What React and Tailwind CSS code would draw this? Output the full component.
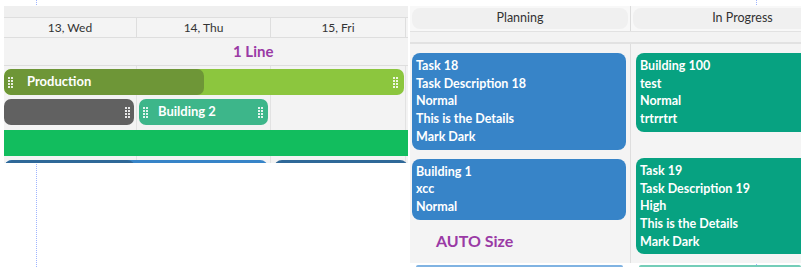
import React from "react";

const font = { fontFamily: "Lato, 'Open Sans', sans-serif" };

function Handle({ className = "" }) {
  return (
    <svg width="5" height="11" viewBox="0 0 5 11" className={className}>
      {[0, 3, 6, 9].map((y) => (
        <g key={y} fill="white" fillOpacity="0.85">
          <rect x="0" y={y} width="2" height="2" />
          <rect x="3" y={y} width="2" height="2" />
        </g>
      ))}
    </svg>
  );
}

function Timeline() {
  return (
    <div className="w-[404px] h-[157px] bg-[#f3f3f3] flex flex-col overflow-hidden">
      <div className="h-[12px] shrink-0 bg-[#efefef] border-b border-[#dedede]" />
      <div className="h-[20px] shrink-0 flex border-b border-[#dedede] bg-[#f4f4f4] text-[12px] text-[#333]">
        <div className="w-[133px] border-r border-[#dedede] flex items-center justify-center">13, Wed</div>
        <div className="w-[134px] border-r border-[#dedede] flex items-center justify-center">14, Thu</div>
        <div className="w-[135px] border-r border-[#dedede] flex items-center justify-center">15, Fri</div>
      </div>
      <div className="h-[28px] shrink-0 border-b border-[#dedede] flex items-center pl-[229px] text-[15px] font-bold text-[#9a3aa5]">
        1 Line
      </div>
      <div className="relative flex-1 min-h-0">
        <div className="absolute inset-0 flex">
          <div className="w-[133px] border-r border-[#e2e2e2]" />
          <div className="w-[134px] border-r border-[#e2e2e2]" />
          <div className="w-[135px] border-r border-[#e2e2e2]" />
        </div>
        <div className="relative flex flex-col gap-[4px] pt-[3px] text-white font-bold text-[13px]">
          <div className="w-[400px] h-[26px] shrink-0 rounded-[7px] bg-[#8cc63e] flex items-center relative overflow-hidden">
            <div className="w-[200px] h-full rounded-[7px] bg-[#6e9637] flex items-center pl-[4px] gap-[14px]">
              <Handle />
              <span>Production</span>
            </div>
            <Handle className="ml-auto mr-[6px]" />
          </div>
          <div className="flex gap-[5px] h-[26px] shrink-0">
            <div className="w-[130px] rounded-[7px] bg-[#616161] flex items-center justify-end pr-[4px]">
              <Handle />
            </div>
            <div className="w-[129px] rounded-[7px] bg-[#3db68a] flex items-center pl-[4px] pr-[5px] gap-[10px]">
              <Handle />
              <span>Building 2</span>
              <Handle className="ml-auto" />
            </div>
          </div>
          <div className="w-[404px] h-[26px] shrink-0 bg-[#12bd5e] mt-[1px]" />
          <div className="flex gap-[6px] h-[10px] shrink-0">
            <div className="w-[264px] rounded-t-[8px] bg-[#3784c8] overflow-hidden">
              <div className="w-[131px] h-full rounded-t-[8px] bg-[#2f6898]" />
            </div>
            <div className="w-[134px] rounded-t-[8px] bg-[#2f6898]" />
          </div>
        </div>
      </div>
    </div>
  );
}

function Card({ color, lines, className = "" }) {
  return (
    <div className={`shrink-0 rounded-[8px] px-[4px] py-[4px] text-white font-bold text-[12.5px] leading-[17.7px] ${color} ${className}`}>
      {lines.map((l, i) => (
        <div key={i}>{l}</div>
      ))}
    </div>
  );
}

function Board() {
  return (
    <div className="w-[391px] flex flex-col">
      <div className="h-[257px] bg-[#f4f4f4] flex flex-col overflow-hidden">
        <div className="h-[25px] flex bg-[#f8f8f8] text-[12.5px] text-[#333] shrink-0">
          <div className="w-[221px] shrink-0 p-[2px] border-r border-[#dcdcdc]">
            <div className="h-full rounded-[8px] bg-[#f0f0f0] flex items-center justify-center">Planning</div>
          </div>
          <div className="w-[223px] shrink-0 p-[2px]">
            <div className="h-full rounded-[8px] bg-[#f0f0f0] flex items-center justify-center">In Progress</div>
          </div>
        </div>
        <div className="h-[13px] shrink-0 border-t border-[#e2e2e2] border-b-2 bg-[#f3f3f3]" />
        <div className="flex flex-1 min-h-0">
          <div className="w-[221px] shrink-0 border-r border-[#dedede] pl-[2px] pr-[4px] pt-[9px] flex flex-col">
            <Card
              color="bg-[#3784c8]"
              lines={["Task 18", "Task Description 18", "Normal", "This is the Details", "Mark Dark"]}
            />
            <Card color="bg-[#3784c8]" className="mt-[9px]" lines={["Building 1", "xcc", "Normal"]} />
            <div className="pl-[24px] pt-[9px] text-[16px] font-bold text-[#9a3aa5]">AUTO Size</div>
          </div>
          <div className="w-[223px] shrink-0 pl-[5px] pt-[9px] flex flex-col">
            <Card color="bg-[#07a281]" lines={["Building 100", "test", "Normal", "trtrrtrt"]} />
            <Card
              color="bg-[#07a281]"
              className="mt-[26px]"
              lines={["Task 19", "Task Description 19", "High", "This is the Details", "Mark Dark"]}
            />
          </div>
        </div>
      </div>
      <div className="h-[2px]" />
      <div className="flex h-[2px]">
        <div className="w-[221px] pl-[6px] pr-[8px]">
          <div className="h-full bg-[#80b3e2] rounded-t-[4px]" />
        </div>
        <div className="w-[170px] pl-[8px]">
          <div className="h-full bg-[#74cdb8] rounded-t-[4px]" />
        </div>
      </div>
    </div>
  );
}

export default function App() {
  return (
    <div style={font} className="relative w-[801px] h-[267px] bg-white overflow-hidden">
      <div className="absolute left-[36px] top-0 h-full border-l border-dotted border-[#9fb4ff]" />
      <div className="absolute left-[756px] top-0 h-full border-l border-dotted border-[#9fb4ff]" />
      <div className="relative flex pt-[6px]">
        <div className="ml-[4px]">
          <Timeline />
        </div>
        <div className="ml-[2px]">
          <Board />
        </div>
      </div>
    </div>
  );
}
